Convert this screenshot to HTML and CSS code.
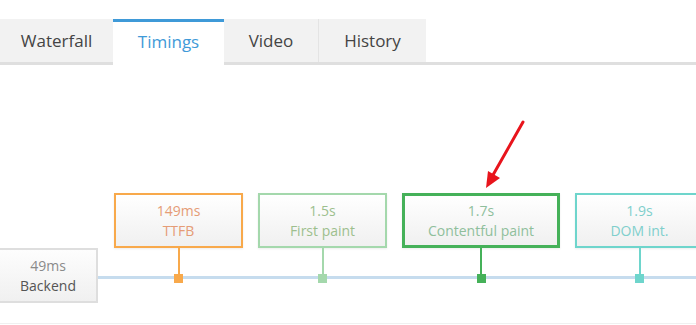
FILE: index.html
```html
<!DOCTYPE html>
<html lang="en">
<head>
  <meta charset="UTF-8">
  <meta name="viewport" content="width=device-width, initial-scale=1.0">
  <title>Timings</title>
  <link rel="stylesheet" href="styles.css">
</head>
<body>
  <div class="page">
    <div class="tabs">
      <div class="tab tab-waterfall">Waterfall</div>
      <div class="tab tab-timings active">Timings</div>
      <div class="tab tab-video">Video</div>
      <div class="tab tab-history">History</div>
    </div>

    <div class="timeline">
      <div class="backend">
        <span class="value">49ms</span>
        <span class="label">Backend</span>
      </div>

      <div class="events">
        <div class="event ttfb">
          <div class="box"><span>149ms</span><span>TTFB</span></div>
          <div class="stem"></div>
          <div class="marker"></div>
        </div>
        <div class="event first-paint">
          <div class="box"><span>1.5s</span><span>First paint</span></div>
          <div class="stem"></div>
          <div class="marker"></div>
        </div>
        <div class="event contentful wide">
          <div class="box"><span>1.7s</span><span>Contentful paint</span></div>
          <div class="stem"></div>
          <div class="marker"></div>
        </div>
        <div class="event dom">
          <div class="box"><span>1.9s</span><span>DOM int.</span></div>
          <div class="stem"></div>
          <div class="marker"></div>
        </div>
      </div>
    </div>

    <div class="footer-line"></div>

    <svg class="arrow" width="60" height="80" viewBox="0 0 60 80">
      <line x1="47" y1="3" x2="17" y2="56" stroke="#e8141c" stroke-width="3" stroke-linecap="round"/>
      <polygon points="10,69 12,52 24,59" fill="#e8141c"/>
    </svg>
  </div>
</body>
</html>
```

FILE: styles.css
```css
body, html {
  margin: 0;
  padding: 0;
  background: #ffffff;
  font-family: "Open Sans", "Noto Sans", sans-serif;
  overflow: hidden;
}

.page {
  position: relative;
  width: 696px;
  height: 325px;
  padding-top: 19px;
  box-sizing: border-box;
  overflow: hidden;
}

.tabs {
  display: flex;
  height: 43px;
  border-bottom: 3px solid #dfdfdf;
}

.tab {
  background: #f2f2f2;
  color: #444;
  font-size: 17px;
  line-height: 43px;
  text-align: center;
  box-sizing: border-box;
}

.tab-waterfall { width: 113px; }
.tab-timings { width: 111px; }
.tab-video { width: 95px; border-right: 1px solid #e4e4e4; }
.tab-history { width: 107px; }

.tab.active {
  background: #ffffff;
  color: #3f9ad8;
  border-top: 3px solid #3f9ad8;
  height: 46px;
  line-height: 40px;
  margin-bottom: -3px;
}

.timeline {
  display: flex;
  align-items: flex-start;
  margin-top: 128px;
  height: 110px;
  background: linear-gradient(#c6dcee, #c6dcee) no-repeat 0 83px / 100% 3px;
}

.backend {
  flex-shrink: 0;
  width: 98px;
  height: 55px;
  margin-top: 55px;
  box-sizing: border-box;
  border: 2px solid #dedede;
  border-left: none;
  background: linear-gradient(#fdfdfd, #f0f0f0);
  display: flex;
  flex-direction: column;
  align-items: center;
  justify-content: center;
  font-size: 14px;
  line-height: 20px;
}

.backend .value { color: #8a8a8a; }
.backend .label { color: #555; }

.events {
  display: flex;
  flex-shrink: 0;
  gap: 15px;
  margin-left: 16px;
}

.event {
  display: flex;
  flex-direction: column;
  align-items: center;
  flex-shrink: 0;
  width: 129px;
}

.event.wide { width: 158px; }

.box {
  width: 100%;
  height: 55px;
  box-sizing: border-box;
  border: 2px solid;
  background: linear-gradient(#ffffff, #f0f0f0);
  box-shadow: 0 1px 2px rgba(0,0,0,0.08);
  display: flex;
  flex-direction: column;
  align-items: center;
  justify-content: center;
  font-size: 14px;
  line-height: 20px;
}

.stem {
  width: 2px;
  height: 26px;
}

.marker {
  width: 9px;
  height: 9px;
}

.ttfb .box { border-color: #f8a94b; color: #e59c76; }
.ttfb .stem, .ttfb .marker { background: #f8a94b; }

.first-paint .box { border-color: #a4d8ac; color: #9dbf8e; }
.first-paint .stem, .first-paint .marker { background: #a4d8ac; }

.contentful .box { border: 3px solid #45b159; color: #8fbf9c; }
.contentful .stem, .contentful .marker { background: #45b159; }

.dom .box { border-color: #6ed5cc; color: #7fcfcc; }
.dom .stem, .dom .marker { background: #6ed5cc; }

.footer-line {
  position: absolute;
  left: 0;
  right: 0;
  top: 323px;
  height: 1px;
  background: #f0f0f0;
}

.arrow {
  position: absolute;
  left: 476px;
  top: 119px;
}
```
